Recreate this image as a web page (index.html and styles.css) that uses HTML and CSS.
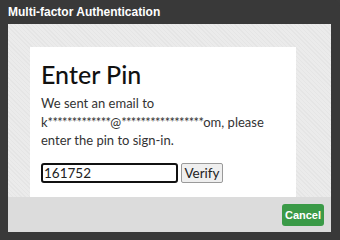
FILE: index.html
```html
<!DOCTYPE html>
<html>
<head>
<meta charset="utf-8">
<link rel="stylesheet" href="styles.css">
</head>
<body>
<div class="window">
  <div class="title">Multi-factor Authentication</div>
  <div class="frame">
    <div class="content">
      <div class="panel">
        <h1 class="heading">Enter Pin</h1>
        <p class="message">We sent an email to<br>k<span class="mask">*************</span>@<span class="mask">*****************</span>om, please<br>enter the pin to sign-in.</p>
        <div class="form">
          <input class="pin" type="text" value="161752">
          <button class="verify">Verify</button>
        </div>
      </div>
    </div>
    <div class="footer">
      <button class="cancel">Cancel</button>
    </div>
  </div>
</div>
</body>
</html>
```

FILE: styles.css
```css
html, body {
  margin: 0;
  padding: 0;
  background: #3a3a3a;
}
.window {
  width: 340px;
  height: 240px;
  box-sizing: border-box;
  background: #393939;
  border-radius: 0 7px 0 0;
  display: flex;
  flex-direction: column;
  overflow: hidden;
}
.title {
  height: 24px;
  box-sizing: border-box;
  padding: 5px 0 0 8px;
  color: #ffffff;
  font-family: "Liberation Sans", Arial, sans-serif;
  font-weight: bold;
  font-size: 12px;
  line-height: 14px;
}
.frame {
  flex: 1;
  margin: 0 9px 8px 8px;
  display: flex;
  flex-direction: column;
}
.content {
  flex: 1;
  padding: 23px 35px 0 22px;
  background-color: #e9e9e9;
  background-image: repeating-linear-gradient(45deg, #e5e5e5 0px, #e5e5e5 1px, #ebebeb 1px, #ebebeb 3px);
  display: flex;
}
.panel {
  flex: 1;
  background: #ffffff;
  padding: 0 11px 0 11px;
  font-family: Lato, "Noto Sans", sans-serif;
  color: #222222;
}
.heading {
  margin: 12px 0 0 0;
  font-size: 25px;
  line-height: 30px;
  font-weight: 500;
  color: #111111;
}
.message {
  margin: 5px 0 0 0;
  font-size: 13px;
  line-height: 18.5px;
  color: #333333;
  white-space: nowrap;
}
.mask {
  letter-spacing: -0.7px;
}
.form {
  margin-top: 13px;
  display: flex;
  gap: 3px;
}
.pin {
  width: 137px;
  height: 20px;
  box-sizing: border-box;
  border: 2px solid #111111;
  border-radius: 3px;
  padding: 0 1px;
  font-family: Lato, "Noto Sans", sans-serif;
  font-size: 13.5px;
  color: #222222;
  outline: none;
}
.verify {
  width: 42px;
  height: 20px;
  box-sizing: border-box;
  border: 1px solid #9a9a9a;
  border-radius: 2px;
  background: #efefef;
  padding: 0;
  font-family: Lato, "Noto Sans", sans-serif;
  font-size: 13.5px;
  color: #222222;
}
.footer {
  height: 35px;
  background: #dcdcdc;
  display: flex;
  justify-content: flex-end;
  align-items: center;
  padding-right: 7px;
}
.cancel {
  width: 42px;
  height: 22px;
  border: none;
  border-radius: 3px;
  background: #3a9a47;
  color: #ffffff;
  font-family: "Liberation Sans", Arial, sans-serif;
  font-weight: bold;
  font-size: 11px;
  padding: 0;
}
```
